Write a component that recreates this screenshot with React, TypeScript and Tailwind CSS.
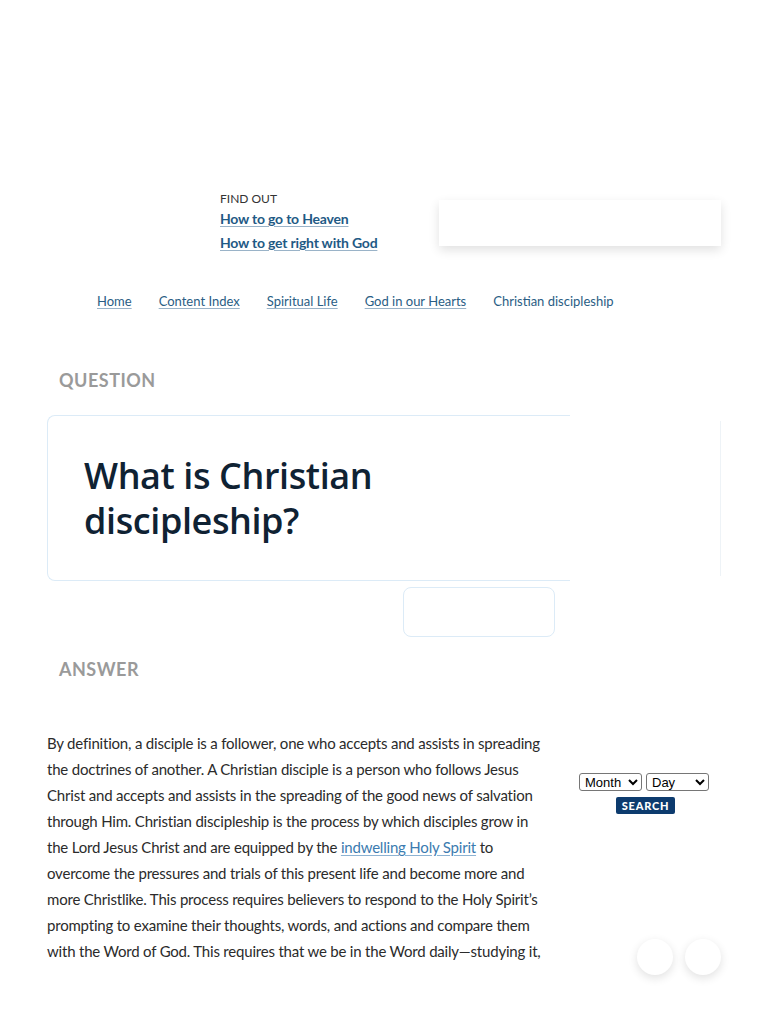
const crumbs = [
  { name: "Home", link: true },
  { name: "Content Index", link: true },
  { name: "Spiritual Life", link: true },
  { name: "God in our Hearts", link: true },
  { name: "Christian discipleship", link: false },
];

const App = () => {
  return (
    <div className="w-[768px] h-[1024px] bg-white overflow-hidden font-['Lato',sans-serif] text-[#1f2b36]">
      {/* find out header */}
      <div className="pt-[191px] flex">
        <div className="ml-[220px] w-[219px] flex flex-col">
          <div className="text-[12px] leading-[15px] text-[#333]">FIND OUT</div>
          <a className="mt-[4px] text-[14px] leading-[18px] font-bold text-[#1f5a85] underline underline-offset-2 decoration-[#9ab3c8] tracking-[-0.2px]">
            How to go to Heaven
          </a>
          <a className="mt-[6px] text-[14px] leading-[18px] font-bold text-[#1f5a85] underline underline-offset-2 decoration-[#9ab3c8] tracking-[-0.2px]">
            How to get right with God
          </a>
        </div>
        <div className="mt-[9px] w-[282px] h-[46px] bg-white shadow-[0_4px_10px_rgba(0,0,0,0.12)]" />
      </div>

      {/* breadcrumbs */}
      <div className="mt-[40px] ml-[97px] flex gap-[27px] text-[13px] leading-[18px] text-[#2a5d84]">
        {crumbs.map((c) => (
          <a
            key={c.name}
            className={c.link ? "underline underline-offset-2 decoration-[#9ab3c8]" : ""}
          >
            {c.name}
          </a>
        ))}
      </div>

      <div className="mt-[59px] ml-[47px] w-[674px]">
        <div className="pl-[12px] text-[18px] leading-[22px] font-bold tracking-[0.5px] text-[#9a9a9a]">
          QUESTION
        </div>

        {/* question card */}
        <div className="mt-[24px] flex h-[166px]">
          <div className="w-[523px] border-l border-t border-b border-[#dcebf7] rounded-l-[8px] pl-[36px] pt-[37px]">
            <h1 className="text-[36px] leading-[45px] font-semibold text-[#0f2233] font-['Open_Sans',sans-serif] tracking-[-0.4px]">
              What is Christian
              <br />
              discipleship?
            </h1>
          </div>
          <div className="flex-1 flex items-center justify-end">
            <div className="h-[155px] border-r border-[#eef3f7]" />
          </div>
        </div>

        <div className="mt-[6px] ml-[356px] w-[152px] h-[50px] border border-[#dcebf7] rounded-[8px]" />

        <div className="mt-[21px] pl-[12px] text-[18px] leading-[22px] font-bold tracking-[0.5px] text-[#9a9a9a]">
          ANSWER
        </div>

        <div className="flex">
          <p className="mt-[50px] w-[500px] shrink-0 text-[15px] leading-[26px] text-[#2b2b2b] tracking-[-0.2px]">
            By definition, a disciple is a follower, one who accepts and assists in spreading the
            doctrines of another. A Christian disciple is a person who follows Jesus Christ and
            accepts and assists in the spreading of the good news of salvation through Him.
            Christian discipleship is the process by which disciples grow in the Lord Jesus Christ
            and are equipped by the{" "}
            <a className="text-[#3b7bb0] underline underline-offset-2 decoration-[#8db3d3]">
              indwelling Holy Spirit
            </a>{" "}
            to overcome the pressures and trials of this present life and become more and more
            Christlike. This process requires believers to respond to the Holy Spirit’s prompting
            to examine their thoughts, words, and actions and compare them with the Word of God.
            This requires that we be in the Word daily—studying it,
          </p>

          <div className="flex-1 flex flex-col">
            <div className="mt-[93px] ml-[32px] flex gap-[4px] font-['Liberation_Sans',sans-serif]">
              <select className="w-[63px] h-[18px] text-[13px] leading-[16px] border border-[#767676] rounded-[3px] px-[1px] text-black bg-white">
                <option>Month</option>
              </select>
              <select className="w-[63px] h-[18px] text-[13px] leading-[16px] border border-[#767676] rounded-[3px] px-[1px] text-black bg-white">
                <option>Day</option>
              </select>
            </div>
            <div className="mt-[6px] ml-[69px] w-[59px] h-[17px] bg-[#0d3b6e] rounded-[2px] text-white text-[11px] leading-[17px] font-black tracking-[0.8px] text-center">
              SEARCH
            </div>
            <div className="mt-[125px] ml-[90px] flex gap-[12px]">
              <div className="w-[36px] h-[36px] rounded-full bg-white shadow-[0_3px_10px_rgba(0,0,0,0.12)]" />
              <div className="w-[36px] h-[36px] rounded-full bg-white shadow-[0_3px_10px_rgba(0,0,0,0.12)]" />
            </div>
          </div>
        </div>
      </div>
    </div>
  );
};

export default App;
